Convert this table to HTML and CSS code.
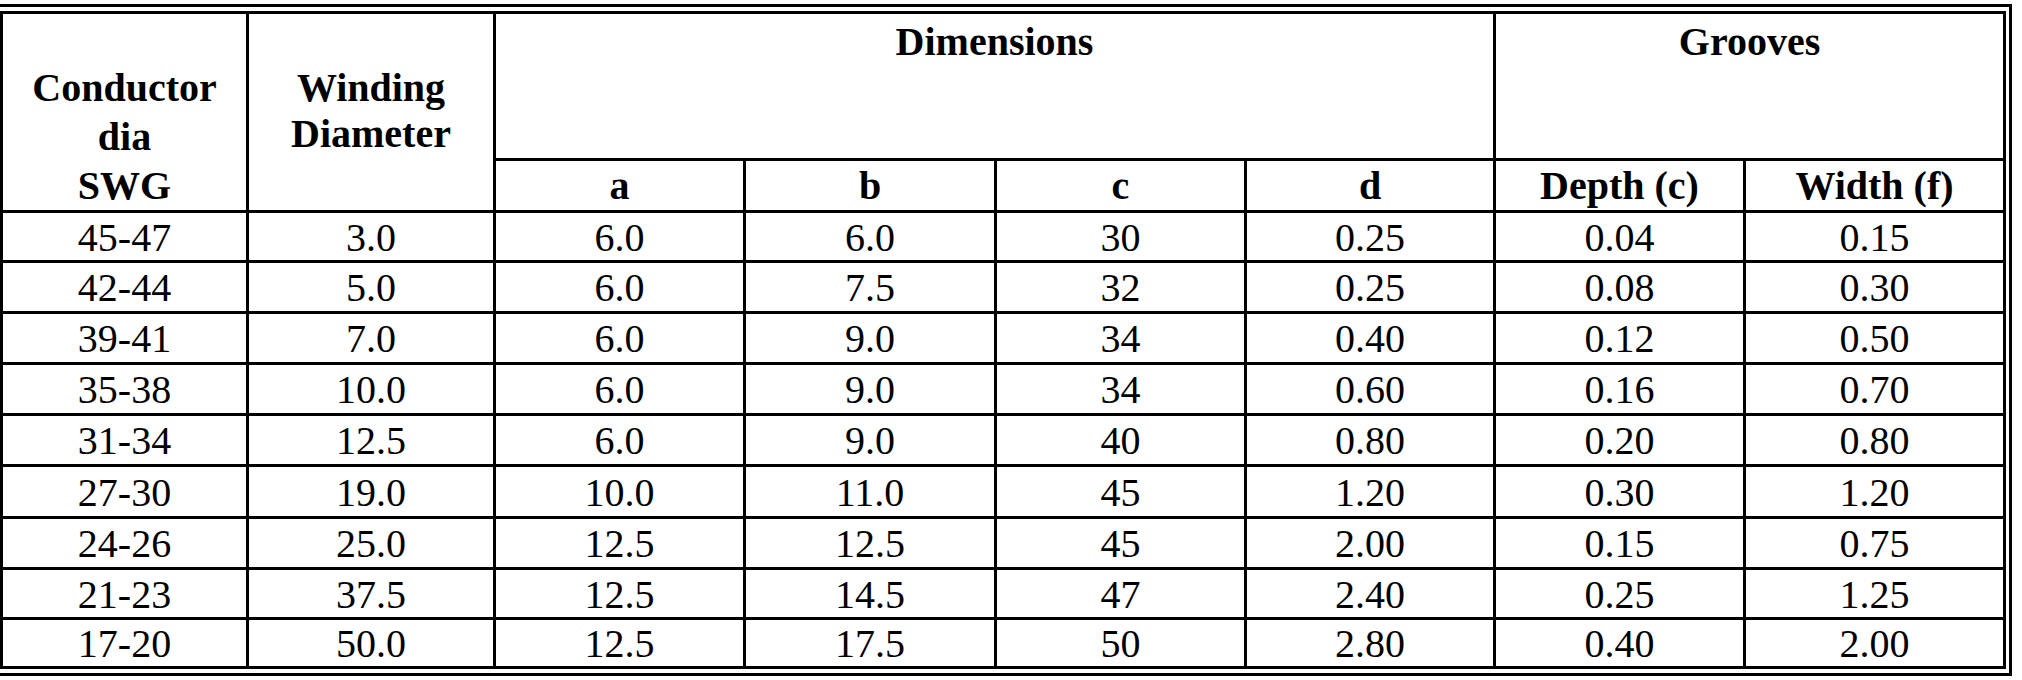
FILE: index.html
```html
<!DOCTYPE html>
<html lang="en">
<head>
<meta charset="utf-8">
<title>Winding dimensions</title>
<link rel="stylesheet" href="styles.css">
</head>
<body>
<div class="frame">
  <table class="grid">
    <colgroup>
      <col class="w246"><col class="w247"><col class="w250"><col class="w251"><col class="w250"><col class="w249"><col class="w250"><col class="w260">
    </colgroup>
    <thead>
      <tr class="head-top">
        <th rowspan="2" class="cond">Conductor<br>dia<br>SWG</th>
        <th rowspan="2" class="wind">Winding<br>Diameter</th>
        <th colspan="4" class="group">Dimensions</th>
        <th colspan="2" class="group">Grooves</th>
      </tr>
      <tr class="head-sub">
        <th>a</th><th>b</th><th>c</th><th>d</th><th>Depth (c)</th><th>Width (f)</th>
      </tr>
    </thead>
    <tbody>
      <tr class="r50"><td>45-47</td><td>3.0</td><td>6.0</td><td>6.0</td><td>30</td><td>0.25</td><td>0.04</td><td>0.15</td></tr>
      <tr><td>42-44</td><td>5.0</td><td>6.0</td><td>7.5</td><td>32</td><td>0.25</td><td>0.08</td><td>0.30</td></tr>
      <tr><td>39-41</td><td>7.0</td><td>6.0</td><td>9.0</td><td>34</td><td>0.40</td><td>0.12</td><td>0.50</td></tr>
      <tr><td>35-38</td><td>10.0</td><td>6.0</td><td>9.0</td><td>34</td><td>0.60</td><td>0.16</td><td>0.70</td></tr>
      <tr><td>31-34</td><td>12.5</td><td>6.0</td><td>9.0</td><td>40</td><td>0.80</td><td>0.20</td><td>0.80</td></tr>
      <tr class="r52"><td>27-30</td><td>19.0</td><td>10.0</td><td>11.0</td><td>45</td><td>1.20</td><td>0.30</td><td>1.20</td></tr>
      <tr><td>24-26</td><td>25.0</td><td>12.5</td><td>12.5</td><td>45</td><td>2.00</td><td>0.15</td><td>0.75</td></tr>
      <tr class="r50"><td>21-23</td><td>37.5</td><td>12.5</td><td>14.5</td><td>47</td><td>2.40</td><td>0.25</td><td>1.25</td></tr>
      <tr class="r49"><td>17-20</td><td>50.0</td><td>12.5</td><td>17.5</td><td>50</td><td>2.80</td><td>0.40</td><td>2.00</td></tr>
    </tbody>
  </table>
</div>
</body>
</html>
```

FILE: styles.css
```css
html, body {
  margin: 0;
  padding: 0;
  background: #ffffff;
}

body {
  width: 2022px;
  height: 680px;
  overflow: hidden;
  font-family: "Liberation Serif", "Times New Roman", serif;
  color: #000000;
}

.frame {
  width: fit-content;
  margin: 4px 0 0 0;
  border-top: 3px solid #000;
  border-right: 3px solid #000;
  border-bottom: 3px solid #000;
  padding: 4px 3px 4px 0;
}

.grid {
  width: 2006px;
  table-layout: fixed;
  border-collapse: separate;
  border-spacing: 0;
  border-top: 3px solid #000;
  border-left: 3px solid #000;
  font-size: 40px;
  line-height: 44px;
}

.w246 { width: 246px; }
.w247 { width: 247px; }
.w249 { width: 249px; }
.w250 { width: 250px; }
.w251 { width: 251px; }
.w260 { width: 260px; }

.grid th,
.grid td {
  box-sizing: border-box;
  border-right: 3px solid #000;
  border-bottom: 3px solid #000;
  padding: 0;
  text-align: center;
  white-space: nowrap;
}

.grid th {
  font-weight: bold;
}

.head-top {
  height: 147px;
}

.head-sub {
  height: 52px;
}

.grid .head-sub th {
  vertical-align: bottom;
  line-height: 46px;
  padding-bottom: 1px;
}

.grid th.group {
  vertical-align: top;
  line-height: 46px;
  padding-top: 5px;
}

.grid th.cond {
  vertical-align: bottom;
  line-height: 49px;
  padding-bottom: 0;
}

.grid th.wind {
  vertical-align: middle;
  line-height: 46px;
  padding-bottom: 3px;
}

.grid tbody tr {
  height: 51px;
}

.grid tbody tr.r50 { height: 50px; }
.grid tbody tr.r52 { height: 52px; }
.grid tbody tr.r49 { height: 49px; }

.grid td {
  vertical-align: middle;
  padding-top: 2px;
}
```
